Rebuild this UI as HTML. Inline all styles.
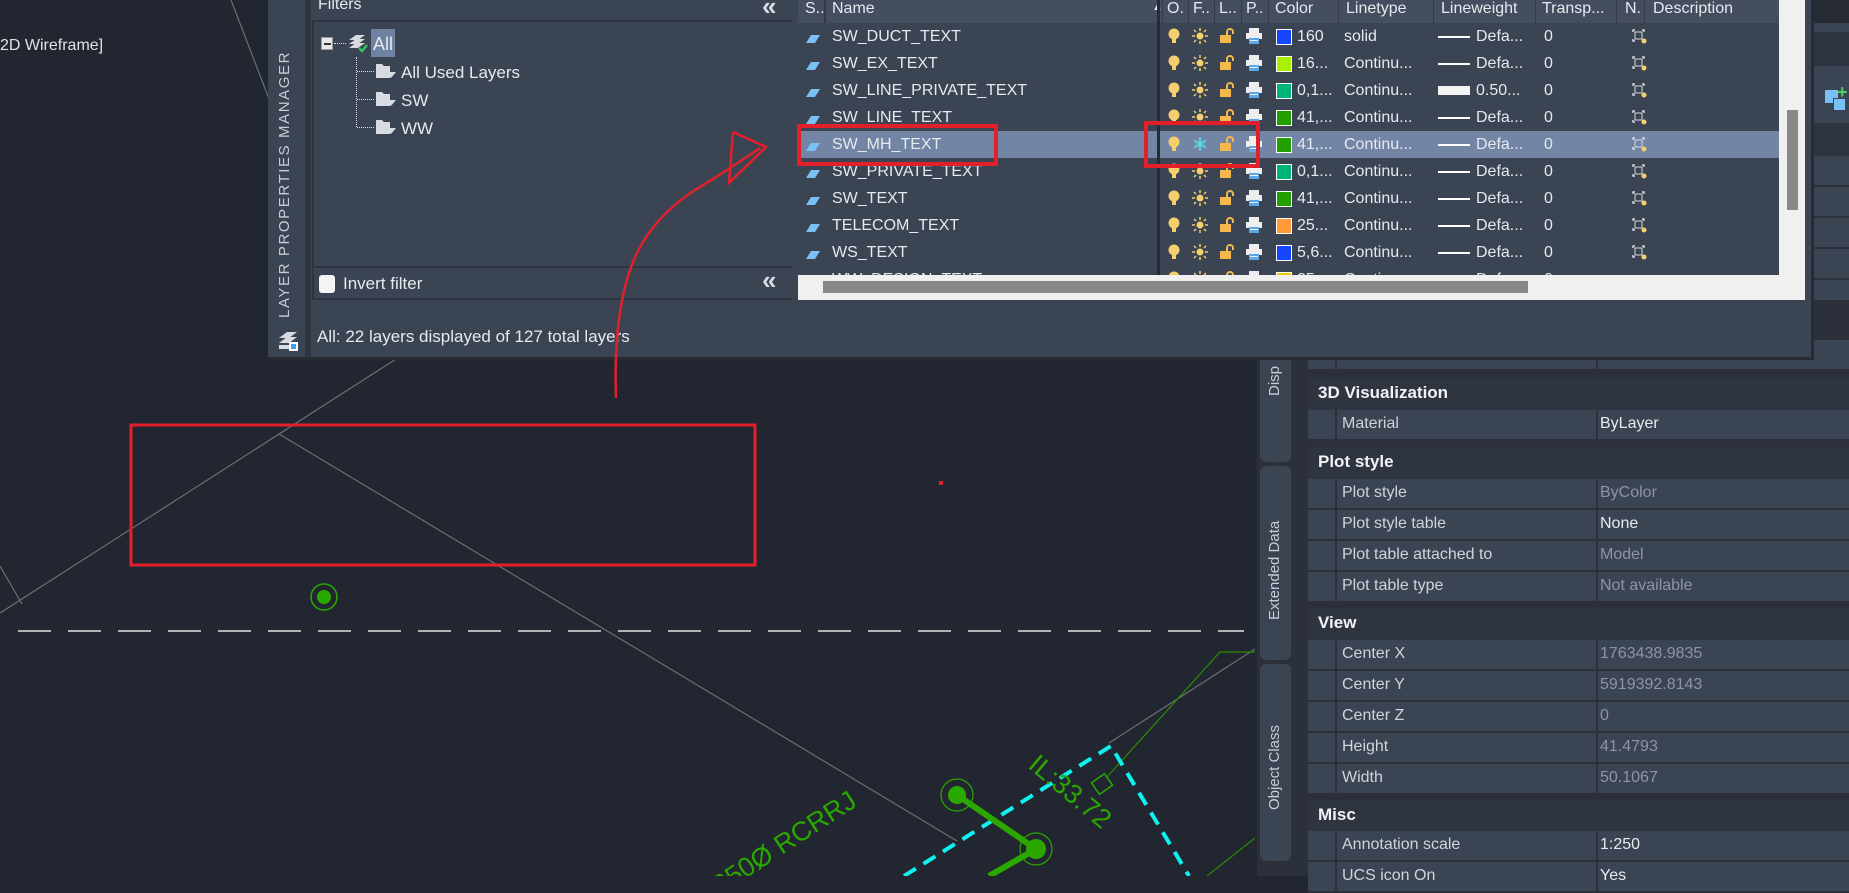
<!DOCTYPE html>
<html><head><meta charset="utf-8">
<style>
*{margin:0;padding:0;box-sizing:border-box}
body{width:1849px;height:876px;overflow:hidden;background:#212630;font-family:"Liberation Sans",sans-serif;color:#e6e9ee;position:relative}
.a{position:absolute}
.t{position:absolute;white-space:nowrap}
.row{position:absolute;left:0;width:981px;height:27px}
.row .t{top:5px;font-size:16px}
.hdr .t{font-size:16px;top:0px}
.prow{position:absolute;left:1308px;width:541px;height:31px;background:#3b4453;border-bottom:2px solid #2b303a}
.prow .l{position:absolute;left:27px;top:0;width:263px;height:29px;border-left:2px solid #2b303a;border-right:2px solid #2b303a;padding:5px 0 0 5px;font-size:16px;color:#d0d4da}
.prow .v{position:absolute;left:292px;top:5px;font-size:16px;color:#e8eaee}
.prow .v.g{color:#8d95a2}
.sec{position:absolute;left:1308px;width:541px;height:32px;background:#2e3440;font-weight:bold;font-size:17px;padding:5px 0 0 10px;color:#f0f2f4}
</style></head><body>

<!-- drawing canvas -->
<svg class="a" style="left:0;top:0" width="1849" height="876">
 <line x1="231" y1="0" x2="271" y2="104" stroke="#6a6e75" stroke-width="1.2"/>
 <line x1="0" y1="613" x2="460" y2="318" stroke="#6a6e75" stroke-width="1.2"/>
 <line x1="0" y1="566" x2="22" y2="604" stroke="#6a6e75" stroke-width="1.2"/>
 <line x1="279" y1="434" x2="957" y2="841" stroke="#6a6e75" stroke-width="1.2"/>
 <line x1="1109" y1="743" x2="1255" y2="649" stroke="#6a6e75" stroke-width="1.2"/>
 <line x1="18" y1="631" x2="1244" y2="631" stroke="#e0e0e0" stroke-width="1.5" stroke-dasharray="33 17"/>
 <rect x="131" y="425" width="624" height="140" fill="none" stroke="#e3202a" stroke-width="3"/>
 <rect x="939" y="481" width="4" height="4" fill="#e3202a"/>
 <circle cx="324" cy="597" r="13" fill="none" stroke="#2aa800" stroke-width="1.5"/>
 <circle cx="324" cy="597" r="7" fill="#2aa800"/>
 <polyline points="1255,652 1220,652 1107,777" fill="none" stroke="#2a8a00" stroke-width="1.2"/>
 <line x1="1255" y1="838" x2="1207" y2="876" stroke="#2a8a00" stroke-width="1.2"/>
 <polyline points="904,876 1111,746 1189,876" fill="none" stroke="#10f0f0" stroke-width="4" stroke-dasharray="14 9"/>
 <line x1="957" y1="795" x2="1036" y2="849" stroke="#2aa800" stroke-width="6"/>
 <line x1="1036" y1="849" x2="989" y2="876" stroke="#2aa800" stroke-width="6"/>
 <circle cx="957" cy="795" r="16" fill="none" stroke="#2aa800" stroke-width="1.2"/>
 <circle cx="957" cy="795" r="9" fill="#2aa800"/>
 <circle cx="1036" cy="849" r="16" fill="none" stroke="#2aa800" stroke-width="1.2"/>
 <circle cx="1036" cy="849" r="10" fill="#2aa800"/>
 <rect x="1094" y="777" width="16" height="14" fill="none" stroke="#2aa800" stroke-width="1.5" transform="rotate(-35 1102 784)"/>
 <text x="1027" y="767" fill="#2aa800" font-family="Liberation Sans" font-size="27" transform="rotate(40 1027 767)">IL:33.72</text>
 <text x="720" y="895" fill="#2aa800" font-family="Liberation Sans" font-size="27" transform="rotate(-33 720 895)">250Ø RCRRJ</text>
</svg>
<div class="t" style="left:0;top:37px;font-size:16px;color:#e0e3e8">2D Wireframe]</div>

<!-- right side upper column -->
<div class="a" style="left:1814px;top:0;width:35px;height:360px;background:#3b4453">
 <div class="a" style="left:0;top:0;width:35px;height:23px;background:#262b34"></div>
 <div class="a" style="left:0;top:32px;width:35px;height:34px;background:#2e3440"></div>
 <div class="a" style="left:0;top:123px;width:35px;height:33px;background:#2e3440"></div>
 <div class="a" style="left:11px;top:90px;width:13px;height:13px;background:#79c0f5"></div>
 <div class="a" style="left:19px;top:98px;width:13px;height:13px;background:#79c0f5;border:1px solid #3b4453"></div>
 <div class="t" style="left:23px;top:82px;color:#4cd060;font-size:18px;font-weight:bold">+</div>
 <div class="a" style="left:0;top:185px;width:35px;height:2px;background:#2b303a"></div>
 <div class="a" style="left:0;top:216px;width:35px;height:2px;background:#2b303a"></div>
 <div class="a" style="left:0;top:247px;width:35px;height:2px;background:#2b303a"></div>
 <div class="a" style="left:0;top:278px;width:35px;height:2px;background:#2b303a"></div>
 <div class="a" style="left:0;top:309px;width:35px;height:2px;background:#2b303a"></div>
 <div class="a" style="left:0;top:340px;width:35px;height:2px;background:#2b303a"></div>
</div>

<!-- properties panel -->
<div class="a" style="left:1257px;top:300px;width:592px;height:576px;background:#2b303a"></div>
<div class="a" style="left:1260px;top:357px;width:31px;height:105px;background:#3b4453;border-radius:0 0 6px 6px"></div>
<div class="a" style="left:1260px;top:466px;width:31px;height:194px;background:#3b4453;border-radius:6px"></div>
<div class="a" style="left:1260px;top:664px;width:31px;height:197px;background:#3b4453;border-radius:6px"></div>
<div class="t" style="left:1266px;top:396px;transform:rotate(-90deg);transform-origin:left top;font-size:15px;color:#c8ccd3">Disp</div>
<div class="t" style="left:1266px;top:620px;transform:rotate(-90deg);transform-origin:left top;font-size:15px;color:#c8ccd3">Extended Data</div>
<div class="t" style="left:1266px;top:810px;transform:rotate(-90deg);transform-origin:left top;font-size:15px;color:#c8ccd3">Object Class</div>
<div class="a" style="left:1297px;top:300px;width:552px;height:576px;background:#2b303a"></div>
<div class="prow" style="top:340px"><div class="l">Thickness</div></div>
<div class="sec" style="top:378px">3D Visualization</div>
<div class="prow" style="top:410px"><div class="l">Material</div><div class="v">ByLayer</div></div>
<div class="sec" style="top:447px">Plot style</div>
<div class="prow" style="top:479px"><div class="l">Plot style</div><div class="v g">ByColor</div></div>
<div class="prow" style="top:510px"><div class="l">Plot style table</div><div class="v">None</div></div>
<div class="prow" style="top:541px"><div class="l">Plot table attached to</div><div class="v g">Model</div></div>
<div class="prow" style="top:572px"><div class="l">Plot table type</div><div class="v g">Not available</div></div>
<div class="sec" style="top:608px">View</div>
<div class="prow" style="top:640px"><div class="l">Center X</div><div class="v g">1763438.9835</div></div>
<div class="prow" style="top:671px"><div class="l">Center Y</div><div class="v g">5919392.8143</div></div>
<div class="prow" style="top:702px"><div class="l">Center Z</div><div class="v g">0</div></div>
<div class="prow" style="top:733px"><div class="l">Height</div><div class="v g">41.4793</div></div>
<div class="prow" style="top:764px"><div class="l">Width</div><div class="v g">50.1067</div></div>
<div class="sec" style="top:800px">Misc</div>
<div class="prow" style="top:831px"><div class="l">Annotation scale</div><div class="v">1:250</div></div>
<div class="prow" style="top:862px"><div class="l">UCS icon On</div><div class="v">Yes</div></div>

<!-- layer properties manager panel -->
<div class="a" style="left:268px;top:0;width:1546px;height:360px;background:#3b4453;border-right:3px solid #262b34;border-bottom:3px solid #262b34"></div>
<div class="a" style="left:305px;top:0;width:6px;height:357px;background:#2e3440"></div>
<div class="t" style="left:276px;top:318px;transform:rotate(-90deg);transform-origin:left top;font-size:15px;letter-spacing:1.6px;color:#c8ccd3">LAYER PROPERTIES MANAGER</div>
<svg class="a" style="left:277px;top:332px" width="22" height="26"><path d="M2 6 L10 0 L20 0 L12 6Z M2 11 L10 5 L20 5 L12 11Z" fill="#d8dce2"/><rect x="2" y="13" width="12" height="4" fill="#d8dce2"/><rect x="12" y="10" width="9" height="9" fill="#fff"/><rect x="14" y="12" width="5" height="5" fill="#3aa0f0"/></svg>

<!-- filters pane -->
<div class="t" style="left:318px;top:-4px;font-size:16px">Filters</div>
<div class="t" style="left:762px;top:-9px;font-size:26px;font-weight:bold;color:#d8dce2">«</div>
<div class="a" style="left:312px;top:20px;width:479px;height:2px;background:#2e3440"></div>
<div class="a" style="left:312px;top:22px;width:2px;height:278px;background:#2e3440"></div>
<div class="a" style="left:312px;top:266px;width:479px;height:2px;background:#2e3440"></div>
<div class="a" style="left:312px;top:298px;width:479px;height:2px;background:#2e3440"></div>
<div class="a" style="left:321px;top:37px;width:12px;height:13px;background:#e8e8e8;border:1px solid #999"></div>
<div class="a" style="left:324px;top:43px;width:7px;height:1.5px;background:#334"></div>
<div class="a" style="left:334px;top:43px;width:12px;border-top:1px dotted #ddd"></div>
<svg class="a" style="left:347px;top:34px" width="22" height="20"><path d="M2 6 L9 1 L18 1 L11 6Z M2 10 L9 5 L18 5 L11 10Z M2 14 L9 9 L18 9 L11 14Z" fill="#d8dce2"/><path d="M12 14 L15 17 L20 11" stroke="#3cc060" stroke-width="2.5" fill="none"/></svg>
<div class="a" style="left:371px;top:29px;width:24px;height:28px;background:#6e82a2"></div>
<div class="t" style="left:373px;top:34px;font-size:18px">All</div>
<div class="a" style="left:356px;top:57px;height:70px;border-left:1px dotted #ddd"></div>
<div class="a" style="left:357px;top:71px;width:17px;border-top:1px dotted #ddd"></div>
<div class="a" style="left:357px;top:99px;width:17px;border-top:1px dotted #ddd"></div>
<div class="a" style="left:357px;top:127px;width:17px;border-top:1px dotted #ddd"></div>
<svg class="a" style="left:375px;top:62px" width="22" height="76"><g fill="#d8dce2"><path d="M1 2h6l2 2h6v12H1z M11 10h10l-5 6z"/><path transform="translate(0,28)" d="M1 2h6l2 2h6v12H1z M11 10h10l-5 6z"/><path transform="translate(0,56)" d="M1 2h6l2 2h6v12H1z M11 10h10l-5 6z"/></g></svg>
<div class="t" style="left:401px;top:63px;font-size:17px">All Used Layers</div>
<div class="t" style="left:401px;top:91px;font-size:17px">SW</div>
<div class="t" style="left:401px;top:119px;font-size:17px">WW</div>
<div class="a" style="left:319px;top:275px;width:16px;height:18px;background:#f4f4f4;border-radius:3px"></div>
<div class="t" style="left:343px;top:274px;font-size:17px">Invert filter</div>
<div class="t" style="left:762px;top:265px;font-size:26px;font-weight:bold;color:#d8dce2">«</div>
<div class="t" style="left:317px;top:327px;font-size:17px">All: 22 layers displayed of 127 total layers</div>

<!-- layer list -->
<div class="a" style="left:798px;top:0;width:1007px;height:300px;background:#f0f0f0"></div>
<div class="a" style="left:823px;top:281px;width:705px;height:12px;background:#888"></div>
<div class="a" style="left:1787px;top:110px;width:11px;height:100px;background:#888"></div>
<div class="a" style="left:798px;top:0;width:981px;height:275px;background:#3b4453;overflow:hidden">
 <div class="a hdr" style="left:0;top:0;width:981px;height:23px;background:#454e5f">
  <div class="t" style="left:7px">S..</div>
  <div class="a" style="left:26px;top:0;width:2px;height:23px;background:#343a47"></div>
  <div class="t" style="left:34px">Name</div>
  <div class="t" style="left:354px;top:1px;font-size:11px">▲</div>
  <div class="a" style="left:359px;top:0;width:3px;height:275px;background:#262b34"></div>
  <div class="t" style="left:369px">O.</div>
  <div class="t" style="left:395px">F..</div>
  <div class="t" style="left:421px">L..</div>
  <div class="t" style="left:448px">P..</div>
  <div class="t" style="left:477px">Color</div>
  <div class="t" style="left:548px">Linetype</div>
  <div class="t" style="left:643px">Lineweight</div>
  <div class="t" style="left:744px">Transp...</div>
  <div class="t" style="left:827px">N.</div>
  <div class="t" style="left:855px">Description</div>
  <div class="a" style="left:364px;top:0;width:1px;height:23px;background:#343a47"></div>
  <div class="a" style="left:390px;top:0;width:1px;height:23px;background:#343a47"></div>
  <div class="a" style="left:416px;top:0;width:1px;height:23px;background:#343a47"></div>
  <div class="a" style="left:443px;top:0;width:1px;height:23px;background:#343a47"></div>
  <div class="a" style="left:470px;top:0;width:1px;height:23px;background:#343a47"></div>
  <div class="a" style="left:540px;top:0;width:1px;height:23px;background:#343a47"></div>
  <div class="a" style="left:635px;top:0;width:1px;height:23px;background:#343a47"></div>
  <div class="a" style="left:737px;top:0;width:1px;height:23px;background:#343a47"></div>
  <div class="a" style="left:818px;top:0;width:1px;height:23px;background:#343a47"></div>
  <div class="a" style="left:846px;top:0;width:1px;height:23px;background:#343a47"></div>
 </div>
 <svg width="0" height="0" style="position:absolute"><defs>
  <g id="sw"><path d="M3 14 L8 6 L17 6 L12 14Z" fill="#79c0f5"/></g>
  <g id="bulb"><circle cx="7" cy="6" r="5.5" fill="#f5cf6e"/><rect x="5" y="11" width="4" height="4" fill="#f5cf6e"/></g>
  <g id="sun"><circle cx="8" cy="8" r="3.5" fill="#f5cf6e"/><g stroke="#f5cf6e" stroke-width="1.5"><line x1="8" y1="0" x2="8" y2="3"/><line x1="8" y1="13" x2="8" y2="16"/><line x1="0" y1="8" x2="3" y2="8"/><line x1="13" y1="8" x2="16" y2="8"/><line x1="2" y1="2" x2="4" y2="4"/><line x1="12" y1="12" x2="14" y2="14"/><line x1="2" y1="14" x2="4" y2="12"/><line x1="12" y1="4" x2="14" y2="2"/></g></g>
  <g id="snow"><g stroke="#5cd8e8" stroke-width="1.8"><line x1="8" y1="1" x2="8" y2="15"/><line x1="2" y1="4.5" x2="14" y2="11.5"/><line x1="2" y1="11.5" x2="14" y2="4.5"/></g></g>
  <g id="lock"><rect x="1" y="7" width="11" height="8" fill="#f5b84c"/><path d="M8 7 V4 a3 3 0 0 1 6 0 V6" stroke="#f5b84c" stroke-width="2" fill="none"/></g>
  <g id="prn"><rect x="3" y="0" width="10" height="5" fill="#eee"/><rect x="0" y="5" width="16" height="6" fill="#eee"/><rect x="3" y="10" width="10" height="6" fill="#5aa8e8"/><rect x="4" y="12" width="8" height="1" fill="#eee"/></g>
  <g id="nn"><path d="M1 3 V1 H3 M10 1 H12 V3 M1 10 V12 H3" stroke="#d8dce2" stroke-width="1.4" fill="none"/><rect x="3" y="3" width="7" height="7" fill="none" stroke="#d8dce2"/><circle cx="12" cy="12" r="2.5" fill="#f5cf6e"/></g>
 </defs></svg>
</div>

<div class="a" style="left:798px;top:23px;width:981px;height:252px;overflow:hidden">
 <div class="row" style="top:0"><svg class="a" style="left:5px;top:6px" width="20" height="16"><use href="#sw"/></svg><div class="t" style="left:34px">SW_DUCT_TEXT</div><svg class="a" style="left:369px;top:5px" width="120" height="18"><use href="#bulb"/><use href="#sun" x="25"/><use href="#lock" x="52"/><use href="#prn" x="79"/></svg><div class="a" style="left:478px;top:6px;width:16px;height:16px;background:#1646ff;border:1px solid #fff"></div><div class="t" style="left:499px">160</div><div class="t" style="left:546px">solid</div><div class="a" style="left:640px;top:13px;width:32px;height:1.5px;background:#fff"></div><div class="t" style="left:678px">Defa...</div><div class="t" style="left:746px">0</div><svg class="a" style="left:834px;top:6px" width="16" height="16"><use href="#nn"/></svg></div>
 <div class="row" style="top:27px"><svg class="a" style="left:5px;top:6px" width="20" height="16"><use href="#sw"/></svg><div class="t" style="left:34px">SW_EX_TEXT</div><svg class="a" style="left:369px;top:5px" width="120" height="18"><use href="#bulb"/><use href="#sun" x="25"/><use href="#lock" x="52"/><use href="#prn" x="79"/></svg><div class="a" style="left:478px;top:6px;width:16px;height:16px;background:#a6f000;border:1px solid #fff"></div><div class="t" style="left:499px">16...</div><div class="t" style="left:546px">Continu...</div><div class="a" style="left:640px;top:13px;width:32px;height:1.5px;background:#fff"></div><div class="t" style="left:678px">Defa...</div><div class="t" style="left:746px">0</div><svg class="a" style="left:834px;top:6px" width="16" height="16"><use href="#nn"/></svg></div>
 <div class="row" style="top:54px"><svg class="a" style="left:5px;top:6px" width="20" height="16"><use href="#sw"/></svg><div class="t" style="left:34px">SW_LINE_PRIVATE_TEXT</div><svg class="a" style="left:369px;top:5px" width="120" height="18"><use href="#bulb"/><use href="#sun" x="25"/><use href="#lock" x="52"/><use href="#prn" x="79"/></svg><div class="a" style="left:478px;top:6px;width:16px;height:16px;background:#00b477;border:1px solid #fff"></div><div class="t" style="left:499px">0,1...</div><div class="t" style="left:546px">Continu...</div><div class="a" style="left:640px;top:9px;width:32px;height:9px;background:#f4f4f4"></div><div class="t" style="left:678px">0.50...</div><div class="t" style="left:746px">0</div><svg class="a" style="left:834px;top:6px" width="16" height="16"><use href="#nn"/></svg></div>
 <div class="row" style="top:81px"><svg class="a" style="left:5px;top:6px" width="20" height="16"><use href="#sw"/></svg><div class="t" style="left:34px">SW_LINE_TEXT</div><svg class="a" style="left:369px;top:5px" width="120" height="18"><use href="#bulb"/><use href="#sun" x="25"/><use href="#lock" x="52"/><use href="#prn" x="79"/></svg><div class="a" style="left:478px;top:6px;width:16px;height:16px;background:#22a000;border:1px solid #fff"></div><div class="t" style="left:499px">41,...</div><div class="t" style="left:546px">Continu...</div><div class="a" style="left:640px;top:13px;width:32px;height:1.5px;background:#fff"></div><div class="t" style="left:678px">Defa...</div><div class="t" style="left:746px">0</div><svg class="a" style="left:834px;top:6px" width="16" height="16"><use href="#nn"/></svg></div>
 <div class="row" style="top:108px;background:#7285a5"><svg class="a" style="left:5px;top:6px" width="20" height="16"><use href="#sw"/></svg><div class="t" style="left:34px">SW_MH_TEXT</div><svg class="a" style="left:369px;top:5px" width="120" height="18"><use href="#bulb"/><use href="#snow" x="25"/><use href="#lock" x="52"/><use href="#prn" x="79"/></svg><div class="a" style="left:478px;top:6px;width:16px;height:16px;background:#22a000;border:1px solid #fff"></div><div class="t" style="left:499px">41,...</div><div class="t" style="left:546px">Continu...</div><div class="a" style="left:640px;top:13px;width:32px;height:1.5px;background:#fff"></div><div class="t" style="left:678px">Defa...</div><div class="t" style="left:746px">0</div><svg class="a" style="left:834px;top:6px" width="16" height="16"><use href="#nn"/></svg></div>
 <div class="row" style="top:135px"><svg class="a" style="left:5px;top:6px" width="20" height="16"><use href="#sw"/></svg><div class="t" style="left:34px">SW_PRIVATE_TEXT</div><svg class="a" style="left:369px;top:5px" width="120" height="18"><use href="#bulb"/><use href="#sun" x="25"/><use href="#lock" x="52"/><use href="#prn" x="79"/></svg><div class="a" style="left:478px;top:6px;width:16px;height:16px;background:#00b477;border:1px solid #fff"></div><div class="t" style="left:499px">0,1...</div><div class="t" style="left:546px">Continu...</div><div class="a" style="left:640px;top:13px;width:32px;height:1.5px;background:#fff"></div><div class="t" style="left:678px">Defa...</div><div class="t" style="left:746px">0</div><svg class="a" style="left:834px;top:6px" width="16" height="16"><use href="#nn"/></svg></div>
 <div class="row" style="top:162px"><svg class="a" style="left:5px;top:6px" width="20" height="16"><use href="#sw"/></svg><div class="t" style="left:34px">SW_TEXT</div><svg class="a" style="left:369px;top:5px" width="120" height="18"><use href="#bulb"/><use href="#sun" x="25"/><use href="#lock" x="52"/><use href="#prn" x="79"/></svg><div class="a" style="left:478px;top:6px;width:16px;height:16px;background:#22a000;border:1px solid #fff"></div><div class="t" style="left:499px">41,...</div><div class="t" style="left:546px">Continu...</div><div class="a" style="left:640px;top:13px;width:32px;height:1.5px;background:#fff"></div><div class="t" style="left:678px">Defa...</div><div class="t" style="left:746px">0</div><svg class="a" style="left:834px;top:6px" width="16" height="16"><use href="#nn"/></svg></div>
 <div class="row" style="top:189px"><svg class="a" style="left:5px;top:6px" width="20" height="16"><use href="#sw"/></svg><div class="t" style="left:34px">TELECOM_TEXT</div><svg class="a" style="left:369px;top:5px" width="120" height="18"><use href="#bulb"/><use href="#sun" x="25"/><use href="#lock" x="52"/><use href="#prn" x="79"/></svg><div class="a" style="left:478px;top:6px;width:16px;height:16px;background:#ff9836;border:1px solid #fff"></div><div class="t" style="left:499px">25...</div><div class="t" style="left:546px">Continu...</div><div class="a" style="left:640px;top:13px;width:32px;height:1.5px;background:#fff"></div><div class="t" style="left:678px">Defa...</div><div class="t" style="left:746px">0</div><svg class="a" style="left:834px;top:6px" width="16" height="16"><use href="#nn"/></svg></div>
 <div class="row" style="top:216px"><svg class="a" style="left:5px;top:6px" width="20" height="16"><use href="#sw"/></svg><div class="t" style="left:34px">WS_TEXT</div><svg class="a" style="left:369px;top:5px" width="120" height="18"><use href="#bulb"/><use href="#sun" x="25"/><use href="#lock" x="52"/><use href="#prn" x="79"/></svg><div class="a" style="left:478px;top:6px;width:16px;height:16px;background:#1646ff;border:1px solid #fff"></div><div class="t" style="left:499px">5,6...</div><div class="t" style="left:546px">Continu...</div><div class="a" style="left:640px;top:13px;width:32px;height:1.5px;background:#fff"></div><div class="t" style="left:678px">Defa...</div><div class="t" style="left:746px">0</div><svg class="a" style="left:834px;top:6px" width="16" height="16"><use href="#nn"/></svg></div>
 <div class="row" style="top:243px"><svg class="a" style="left:5px;top:6px" width="20" height="16"><use href="#sw"/></svg><div class="t" style="left:34px">WW_DESIGN_TEXT</div><svg class="a" style="left:369px;top:5px" width="120" height="18"><use href="#bulb"/><use href="#sun" x="25"/><use href="#lock" x="52"/><use href="#prn" x="79"/></svg><div class="a" style="left:478px;top:6px;width:16px;height:16px;background:#f0c800;border:1px solid #fff"></div><div class="t" style="left:499px">25...</div><div class="t" style="left:546px">Continu...</div><div class="t" style="left:678px">Defa...</div><div class="t" style="left:746px">0</div></div>
</div>
<div class="a" style="left:1157px;top:23px;width:3px;height:252px;background:#262b34"></div>

<!-- red annotation overlay -->
<div class="a" style="left:797px;top:124px;width:201px;height:42px;border:4px solid #e3202a"></div>
<div class="a" style="left:1144px;top:121px;width:116px;height:47px;border:4px solid #e3202a"></div>
<svg class="a" style="left:0;top:0" width="1000" height="420">
 <path d="M616,398 C614,340 620,290 636,255 C650,225 672,205 695,190 C715,178 735,165 760,148" fill="none" stroke="#e3202a" stroke-width="2.5"/>
 <polyline points="733,132 766,147 729,183 733,132" fill="none" stroke="#e3202a" stroke-width="2.5"/>
</svg>
</body></html>
